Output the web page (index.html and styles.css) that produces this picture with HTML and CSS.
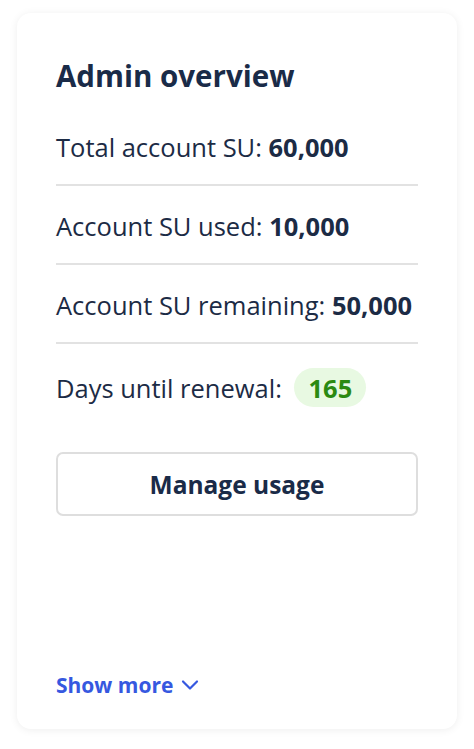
FILE: index.html
```html
<!DOCTYPE html>
<html lang="en">
<head>
<meta charset="utf-8">
<link rel="stylesheet" href="styles.css">
</head>
<body>
<div class="page">
  <section class="card">
    <h2 class="title">Admin overview</h2>
    <div class="row">Total account SU: <strong>60,000</strong></div>
    <div class="row">Account SU used: <strong>10,000</strong></div>
    <div class="row">Account SU remaining: <strong>50,000</strong></div>
    <div class="row last">Days until renewal: <span class="badge">165</span></div>
    <button class="btn">Manage usage</button>
    <div class="spacer"></div>
    <a class="more" href="#">Show more
      <svg class="chev" width="18" height="12" viewBox="0 0 18 12" aria-hidden="true"><path d="M2 2.5 L9 9.5 L16 2.5" fill="none" stroke="currentColor" stroke-width="2.2" stroke-linecap="round" stroke-linejoin="round"/></svg>
    </a>
  </section>
</div>
</body>
</html>
```
FILE: styles.css
```css
* { box-sizing: border-box; }
html, body { margin: 0; padding: 0; background: #ffffff; }
body { font-family: "Open Sans", "Liberation Sans", sans-serif; color: #1c2b45; }
.page { padding: 13px 17px 20px 17px; height: 749px; }
.card {
  height: 716px;
  background: #ffffff;
  border-radius: 14px;
  box-shadow: 0 1px 8px rgba(0,0,0,0.07);
  padding: 46px 39px 30px 39px;
  display: flex;
  flex-direction: column;
}
.title { margin: 0 0 14px 0; font-size: 29.5px; font-weight: 700; line-height: 34px; color: #1a2b48; }
.row {
  font-size: 25.5px; line-height: 30px; padding: 25px 0 22px 0;
  border-bottom: 2px solid #e2e2e2;
  display: flex; align-items: center; white-space: pre;
}
.row strong { font-weight: 700; }
.row.last { border-bottom: none; padding: 24px 0 0 0; }
.badge {
  margin-left: 6px; background: #e8f9e2; color: #2b8a12; font-weight: 700;
  height: 39px; padding: 0 14px; border-radius: 20px; display: inline-flex; align-items: center;
}
.btn {
  margin-top: 45px; height: 64px; width: 100%; flex: none;
  background: #fff; border: 2px solid #dedede; border-radius: 7px;
  font-family: inherit; font-size: 24.5px; font-weight: 700; color: #1a2b48;
}
.spacer { flex: 1; }
.more {
  color: #3658e0; font-size: 21px; font-weight: 700; text-decoration: none;
  display: inline-flex; align-items: center; gap: 8px; align-self: flex-start;
}
.chev { color: #3658e0; }
```
